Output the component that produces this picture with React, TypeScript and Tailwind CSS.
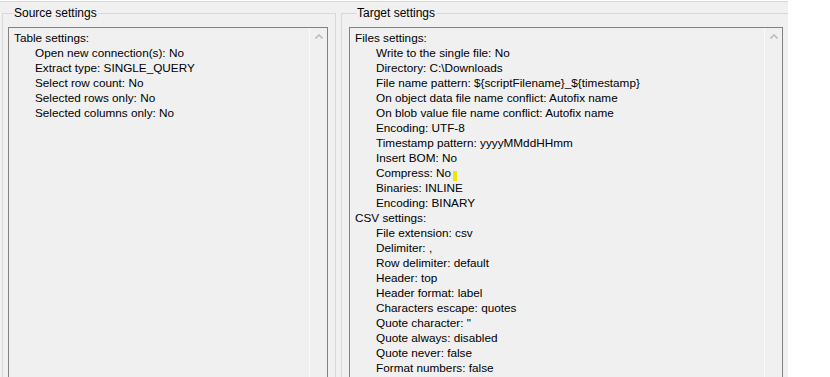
import * as React from "react"

const sourceGroups = [
  {
    title: "Table settings:",
    items: [
      "Open new connection(s): No",
      "Extract type: SINGLE_QUERY",
      "Select row count: No",
      "Selected rows only: No",
      "Selected columns only: No",
    ],
  },
]

const targetGroups = [
  {
    title: "Files settings:",
    items: [
      "Write to the single file: No",
      "Directory: C:\\Downloads",
      "File name pattern: ${scriptFilename}_${timestamp}",
      "On object data file name conflict: Autofix name",
      "On blob value file name conflict: Autofix name",
      "Encoding: UTF-8",
      "Timestamp pattern: yyyyMMddHHmm",
      "Insert BOM: No",
      "Compress: No",
      "Binaries: INLINE",
      "Encoding: BINARY",
    ],
  },
  {
    title: "CSV settings:",
    items: [
      "File extension: csv",
      "Delimiter: ,",
      "Row delimiter: default",
      "Header: top",
      "Header format: label",
      "Characters escape: quotes",
      'Quote character: "',
      "Quote always: disabled",
      "Quote never: false",
      "Format numbers: false",
    ],
  },
]

type Group = { title: string; items: string[] }

function ScrollUp() {
  return (
    <svg width="8" height="5" viewBox="0 0 8 5" className="block">
      <path d="M0.5 4.5 L4 1 L7.5 4.5" fill="none" stroke="#bdbdbd" strokeWidth="1.6" />
    </svg>
  )
}

function SettingsList({ groups, width }: { groups: Group[]; width: string }) {
  return (
    <div className={`flex h-full border border-[#828282] bg-[#f0f0f0] ${width}`}>
      <div className="flex-1 min-w-0 pl-[5px] pt-[2px] overflow-hidden text-[11.75px]">
        {groups.map((g) => (
          <div key={g.title}>
            <div className="h-[15px] leading-[15px] whitespace-nowrap">{g.title}</div>
            {g.items.map((item, i) => (
              <div key={i} className="h-[15px] leading-[15px] pl-[21px] whitespace-nowrap">
                {item}
                {item === "Compress: No" && (
                  <span className="inline-block w-[4px] h-[10px] ml-[2px] align-[-4px] bg-[#f2e600]" />
                )}
              </div>
            ))}
          </div>
        ))}
      </div>
      <div className="w-[18px] shrink-0 border-l border-[#fafafa] flex justify-center pt-[6px]">
        <ScrollUp />
      </div>
    </div>
  )
}

export default function App() {
  return (
    <div className="w-[830px] h-[377px] bg-white overflow-hidden font-['Liberation_Sans',Arial,sans-serif] text-[12px] text-black">
      <div className="w-[788px] h-[376px] mt-[1px] border-t border-[#d9d9d9] bg-[#f0f0f0] overflow-hidden">
        <div className="flex pt-[4px] pl-[2px]">
          <fieldset className="w-[334px] h-[420px] border border-[#d8d8d8] pl-[5px] pr-[7px] pt-[6px] shrink-0">
            <legend className="ml-[5px] px-[1px] h-[15px] leading-[15px]">Source settings</legend>
            <SettingsList groups={sourceGroups} width="w-full" />
          </fieldset>
          <fieldset className="ml-[5px] w-[450px] h-[420px] border border-[#d8d8d8] pl-[7px] pt-[6px] shrink-0">
            <legend className="ml-[7px] px-[1px] h-[15px] leading-[15px]">Target settings</legend>
            <SettingsList groups={targetGroups} width="w-[434px]" />
          </fieldset>
        </div>
      </div>
    </div>
  )
}
